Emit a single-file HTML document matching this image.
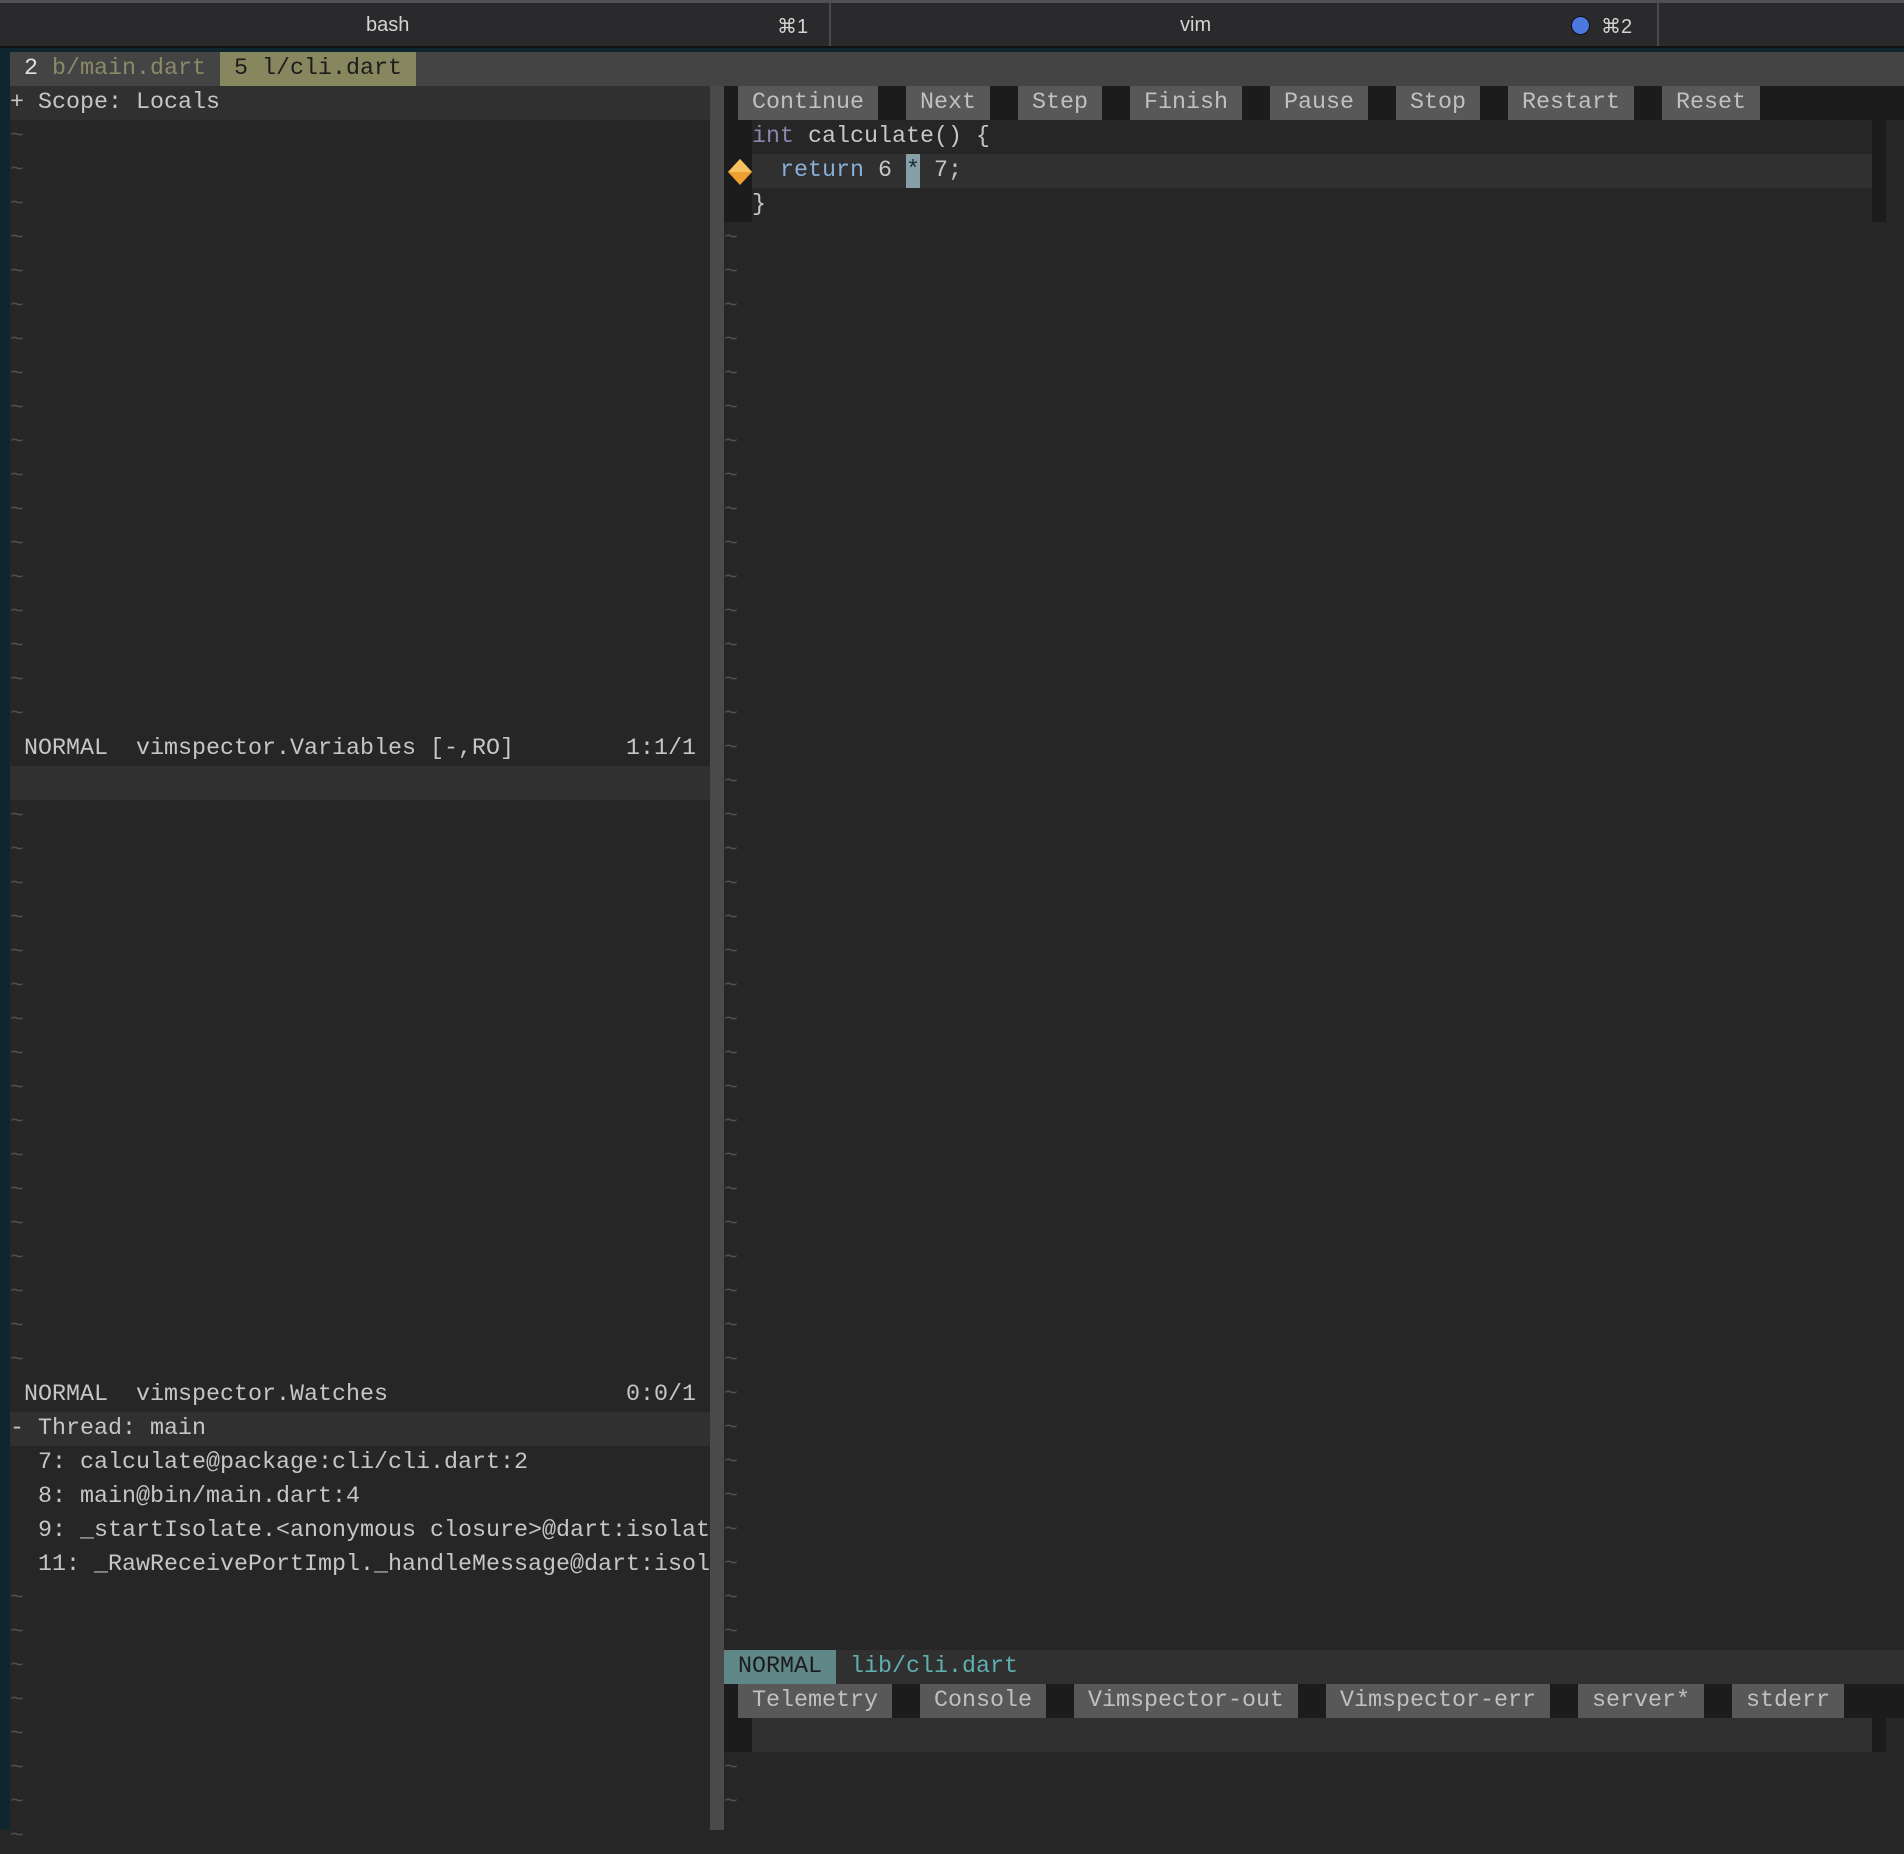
<!DOCTYPE html>
<html><head><meta charset="utf-8"><style>
*{margin:0;padding:0;box-sizing:border-box}
body{width:1904px;height:1830px;background:#262626;position:relative;overflow:hidden;font-family:"Liberation Mono",monospace;font-size:23.33px;color:#c6c6c6}
.a{position:absolute;white-space:pre;line-height:34px;height:34px}
.a span{display:inline-block;height:34px;vertical-align:top}
pre{position:absolute;font-family:"Liberation Mono",monospace;font-size:23.33px;line-height:34px;color:#4e4e4e;margin:0}
.title{position:absolute;left:0;top:0;width:1904px;height:48px;background:#2a2a2c;border-top:3px solid #505052;border-bottom:2px solid #111;font-family:"Liberation Sans",sans-serif;font-size:20px;color:#d4d4d4}
.title span{position:absolute;top:11px}
.btn{background:#585858;color:#c0c0c0}
.dk{background:#1c1c1c}
</style></head><body>
<div class="title">
<span style="left:366px">bash</span><span style="left:777px">⌘1</span>
<div style="position:absolute;left:829px;top:0;width:2px;height:43px;background:#4a4a4a"></div>
<span style="left:1180px">vim</span>
<div style="position:absolute;left:1571px;top:13px;width:19px;height:19px;border-radius:50%;background:#4a78e0;border:1px solid #111"></div>
<span style="left:1601px">⌘2</span>
<div style="position:absolute;left:1657px;top:0;width:2px;height:43px;background:#4a4a4a"></div>
</div>
<div style="position:absolute;left:0;top:48px;width:1904px;height:4px;background:#10262e"></div>
<div style="position:absolute;left:0;top:48px;width:10px;height:1782px;background:#10262e"></div>
<!-- tabline -->
<div class="a" style="left:10px;top:52px;width:1894px;background:#444"><span style="color:#e0e0e0"> 2 </span><span style="color:#8a8a6a">b/main.dart </span><span style="background:#87875f;color:#1c1c1c"> 5 l/cli.dart </span></div>
<!-- separator -->
<div style="position:absolute;left:710px;top:86px;width:14px;height:1744px;background:#4a4a4a"></div>
<!-- left pane -->
<div class="a" style="left:10px;top:86px;width:700px;background:#303030">+ Scope: Locals</div>
<pre style="left:10px;top:120px">~
~
~
~
~
~
~
~
~
~
~
~
~
~
~
~
~
~</pre>
<div class="a" style="left:10px;top:732px;width:700px"> NORMAL  vimspector.Variables [-,RO]        1:1/1</div>
<div class="a" style="left:10px;top:766px;width:700px;background:#303030"></div>
<pre style="left:10px;top:800px">~
~
~
~
~
~
~
~
~
~
~
~
~
~
~
~
~</pre>
<div class="a" style="left:10px;top:1378px;width:700px"> NORMAL  vimspector.Watches                 0:0/1</div>
<div class="a" style="left:10px;top:1412px;width:700px;background:#303030">- Thread: main</div>
<div class="a" style="left:10px;top:1446px;width:700px;overflow:hidden">  7: calculate@package:cli/cli.dart:2</div>
<div class="a" style="left:10px;top:1480px;width:700px;overflow:hidden">  8: main@bin/main.dart:4</div>
<div class="a" style="left:10px;top:1514px;width:700px;overflow:hidden">  9: _startIsolate.&lt;anonymous closure&gt;@dart:isolate</div>
<div class="a" style="left:10px;top:1548px;width:700px;overflow:hidden">  11: _RawReceivePortImpl._handleMessage@dart:isolate</div>
<pre style="left:10px;top:1582px">~
~
~
~
~
~
~
~</pre>
<!-- right pane -->
<div class="a dk" style="left:724px;top:86px;width:1180px"> <span class="btn"> Continue </span>  <span class="btn"> Next </span>  <span class="btn"> Step </span>  <span class="btn"> Finish </span>  <span class="btn"> Pause </span>  <span class="btn"> Stop </span>  <span class="btn"> Restart </span>  <span class="btn"> Reset </span></div>
<div class="dk" style="position:absolute;left:724px;top:120px;width:28px;height:102px"></div>
<div class="dk" style="position:absolute;left:1872px;top:120px;width:14px;height:102px"></div>
<div class="a" style="left:752px;top:120px;width:1120px"><span style="color:#8787af">int</span> calculate() {</div>
<div class="a" style="left:752px;top:154px;width:1120px;background:#303030">  <span style="color:#87afd7">return</span> 6 <span style="background:#87a0a8;color:#1c2a30">*</span> 7;</div>
<svg style="position:absolute;left:727px;top:158px" width="26" height="28" viewBox="0 0 26 28"><polygon points="13,1 25,14 13,27 1,14" fill="#f0a030"/><polygon points="13,1 25,14 1,14" fill="#f7c060"/></svg>
<div class="a" style="left:752px;top:188px;width:1120px">}</div>
<pre style="left:724px;top:222px">~
~
~
~
~
~
~
~
~
~
~
~
~
~
~
~
~
~
~
~
~
~
~
~
~
~
~
~
~
~
~
~
~
~
~
~
~
~
~
~
~
~</pre>
<div class="a" style="left:724px;top:1650px;width:1180px;background:#303030"><span style="background:#5f8787;color:#1c1c1c"> NORMAL </span> <span style="color:#5fafaf">lib/cli.dart</span></div>
<div class="a dk" style="left:724px;top:1684px;width:1180px"> <span class="btn"> Telemetry </span>  <span class="btn"> Console </span>  <span class="btn"> Vimspector-out </span>  <span class="btn"> Vimspector-err </span>  <span class="btn"> server* </span>  <span class="btn"> stderr </span></div>
<div class="dk" style="position:absolute;left:724px;top:1718px;width:28px;height:34px"></div>
<div style="position:absolute;left:752px;top:1718px;width:1120px;height:34px;background:#303030"></div>
<div class="dk" style="position:absolute;left:1872px;top:1718px;width:14px;height:34px"></div>
<pre style="left:724px;top:1752px">~
~</pre>
</body></html>
